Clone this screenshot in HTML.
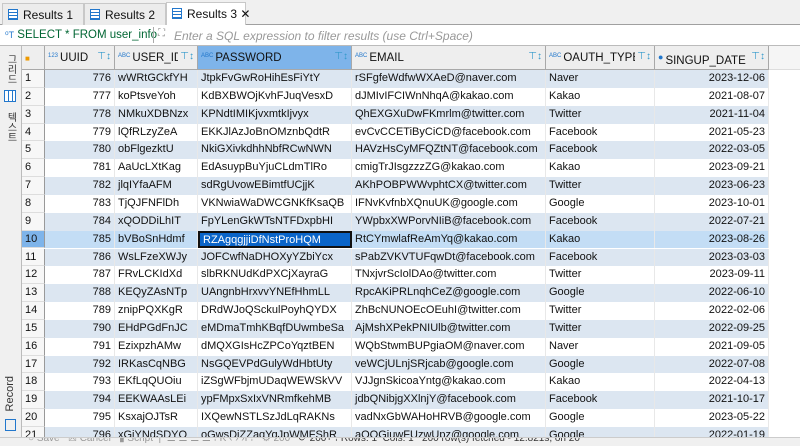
<!DOCTYPE html>
<html><head><meta charset="utf-8"><style>
*{margin:0;padding:0;box-sizing:border-box}
body{width:800px;height:446px;overflow:hidden;background:#fff;font-family:"Liberation Sans","Noto Sans CJK KR",sans-serif;font-size:11px;color:#111;position:relative}
.tabs{position:absolute;left:0;top:0;width:800px;height:25px;background:#f0f0f0;border-bottom:1px solid #a0a0a0}
.tab{position:absolute;top:3px;height:22px;border:1px solid #c8c8c8;border-bottom:none;background:#ececec;padding:4px 0 0 20px;font-size:12px;white-space:nowrap}
.tab.act{background:#fff;top:2px;height:24px}
.tab i{position:absolute;left:5px;top:5px;width:10px;height:11px;border:1px solid #27c;background:repeating-linear-gradient(#fff 0 2px,#27c 2px 3px)}
.filter{position:absolute;left:0;top:25px;width:800px;height:21px;border-bottom:1px solid #bbb;background:#fff;white-space:nowrap}
.side{position:absolute;left:0;top:46px;width:22px;height:391px;background:#f0f0f0;border-right:1px solid #bbb}
.hdr{position:absolute;top:46px;height:24px;background:#eeeeee;border-right:1px solid #a8a8a8;border-bottom:1px solid #a8a8a8;padding:6px 0 0 3px;font-size:11.5px;white-space:nowrap;overflow:hidden}
.hdr b{font-weight:normal;font-size:6px;color:#27c;margin-right:2px;vertical-align:4px}
.hdr s{position:absolute;right:3px;top:5px;text-decoration:none;color:#39c;font-size:10px;background:inherit;padding-left:2px}
.row{position:absolute;left:22px;width:747px;height:17.85px}
.row div{position:absolute;top:0;height:17.85px;padding:2px 3px 0;white-space:nowrap;overflow:hidden;border-right:1px solid #e8e8e8}
.o{background:#dce6f1}.e{background:#fff}.sel{background:#c3ddf5}
.n{left:0;width:23px;background:#f7f7f7;border-right:1px solid #999 !important;border-bottom:1px solid #ddd}
.u{left:23px;width:70px;text-align:right}
.i{left:93px;width:83px}
.p{left:176px;width:154px}
.m{left:330px;width:194px}
.a{left:524px;width:109px}
.d{left:633px;width:114px;text-align:right}
.bot{position:absolute;left:0;top:437px;width:800px;height:9px;background:#f0f0f0;border-top:1px solid #ccc;font-size:11px;color:#999;overflow:hidden}
</style></head><body>
<div class="tabs">
<div class="tab" style="left:2px;width:82px"><i></i>Results 1</div>
<div class="tab" style="left:84px;width:82px"><i></i>Results 2</div>
<div class="tab act" style="left:166px;width:80px"><i></i>Results 3 ✕</div>
</div>
<div class="filter">
<span style="position:absolute;left:5px;top:4px;color:#063;font-size:11.5px"><span style="color:#27c;font-size:9px">⁰T</span> SELECT * FROM user_info</span>
<span style="position:absolute;left:153px;top:2px;width:1px;height:16px;background:#aaa"></span>
<span style="position:absolute;left:158px;top:3px;color:#888;font-size:10px">⛶</span>
<span style="position:absolute;left:174px;top:4px;color:#999;font-style:italic;font-size:12px">Enter a SQL expression to filter results (use Ctrl+Space)</span>
</div>
<div class="side">
<div style="position:absolute;left:4px;top:8px;width:14px;font-size:10px;color:#333;writing-mode:vertical-rl">그리드</div>
<div style="position:absolute;left:4px;top:44px;width:12px;height:12px;border:1px solid #27c;background:repeating-linear-gradient(90deg,#fff 0 3px,#27c 3px 4px)"></div>
<div style="position:absolute;left:4px;top:66px;width:14px;font-size:10px;color:#333;writing-mode:vertical-rl">텍스트</div>
<div style="position:absolute;left:4px;top:330px;width:14px;font-size:11px;color:#333;writing-mode:vertical-rl;transform:rotate(180deg)">Record</div>
<div style="position:absolute;left:5px;top:373px;width:11px;height:12px;border:1px solid #27c"></div>
</div>
<div class="hdr" style="left:22px;width:23px;background:#eee"><span style="color:#e90;font-size:8px">■</span></div>
<div class="hdr" style="left:45px;width:70px"><b>123</b>UUID<s>⊤↕</s></div>
<div class="hdr" style="left:115px;width:83px"><b>ABC</b>USER_ID<s>⊤↕</s></div>
<div class="hdr" style="left:198px;width:154px;background:#7eb4ea"><b>ABC</b>PASSWORD<s>⊤↕</s></div>
<div class="hdr" style="left:352px;width:194px"><b>ABC</b>EMAIL<s>⊤↕</s></div>
<div class="hdr" style="left:546px;width:109px"><b>ABC</b>OAUTH_TYPE<s>⊤↕</s></div>
<div class="hdr" style="left:655px;width:114px"><b style="font-size:9px">●</b>SINGUP_DATE<s>⊤↕</s></div>
<div style="position:absolute;left:769px;top:46px;width:31px;height:24px;background:#f5f5f5;border-bottom:1px solid #ddd"></div>

<div class="row" style="top:70px"><div class="n">1</div><div class="u o">776</div><div class="i o">wWRtGCkfYH</div><div class="p o">JtpkFvGwRoHihEsFiYtY</div><div class="m o">rSFgfeWdfwWXAeD@naver.com</div><div class="a o">Naver</div><div class="d o">2023-12-06</div></div>
<div class="row" style="top:87.85px"><div class="n">2</div><div class="u e">777</div><div class="i e">koPtsveYoh</div><div class="p e">KdBXBWOjKvhFJuqVesxD</div><div class="m e">dJMIvIFCIWnNhqA@kakao.com</div><div class="a e">Kakao</div><div class="d e">2021-08-07</div></div>
<div class="row" style="top:105.7px"><div class="n">3</div><div class="u o">778</div><div class="i o">NMkuXDBNzx</div><div class="p o">KPNdtIMIKjvxmtkIjvyx</div><div class="m o">QhEXGXuDwFKmrlm@twitter.com</div><div class="a o">Twitter</div><div class="d o">2021-11-04</div></div>
<div class="row" style="top:123.55px"><div class="n">4</div><div class="u e">779</div><div class="i e">lQfRLzyZeA</div><div class="p e">EKKJlAzJoBnOMznbQdtR</div><div class="m e">evCvCCETiByCiCD@facebook.com</div><div class="a e">Facebook</div><div class="d e">2021-05-23</div></div>
<div class="row" style="top:141.4px"><div class="n">5</div><div class="u o">780</div><div class="i o">obFlgezktU</div><div class="p o">NkiGXivkdhhNbfRCwNWN</div><div class="m o">HAVzHsCyMFQZtNT@facebook.com</div><div class="a o">Facebook</div><div class="d o">2022-03-05</div></div>
<div class="row" style="top:159.25px"><div class="n">6</div><div class="u e">781</div><div class="i e">AaUcLXtKag</div><div class="p e">EdAsuypBuYjuCLdmTlRo</div><div class="m e">cmigTrJIsgzzzZG@kakao.com</div><div class="a e">Kakao</div><div class="d e">2023-09-21</div></div>
<div class="row" style="top:177.1px"><div class="n">7</div><div class="u o">782</div><div class="i o">jlqIYfaAFM</div><div class="p o">sdRgUvowEBimtfUCjjK</div><div class="m o">AKhPOBPWWvphtCX@twitter.com</div><div class="a o">Twitter</div><div class="d o">2023-06-23</div></div>
<div class="row" style="top:194.95px"><div class="n">8</div><div class="u e">783</div><div class="i e">TjQJFNFlDh</div><div class="p e">VKNwiaWaDWCGNKfKsaQB</div><div class="m e">IFNvKvfnbXQnuUK@google.com</div><div class="a e">Google</div><div class="d e">2023-10-01</div></div>
<div class="row" style="top:212.8px"><div class="n">9</div><div class="u o">784</div><div class="i o">xQODDiLhIT</div><div class="p o">FpYLenGkWTsNTFDxpbHI</div><div class="m o">YWpbxXWPorvNIiB@facebook.com</div><div class="a o">Facebook</div><div class="d o">2022-07-21</div></div>
<div class="row" style="top:230.65px"><div class="n" style="background:#7eb4ea">10</div><div class="u sel">785</div><div class="i sel">bVBoSnHdmf</div><div class="p" style="background:#0a64c8;color:#fff;border:2px solid #111;padding-top:1px">RZAgqgjjiDfNstProHQM</div><div class="m sel">RtCYmwlafReAmYq@kakao.com</div><div class="a sel">Kakao</div><div class="d sel">2023-08-26</div></div>
<div class="row" style="top:248.5px"><div class="n">11</div><div class="u o">786</div><div class="i o">WsLFzeXWJy</div><div class="p o">JOFCwfNaDHOXyYZbiYcx</div><div class="m o">sPabZVKVTUFqwDt@facebook.com</div><div class="a o">Facebook</div><div class="d o">2023-03-03</div></div>
<div class="row" style="top:266.35px"><div class="n">12</div><div class="u e">787</div><div class="i e">FRvLCKIdXd</div><div class="p e">slbRKNUdKdPXCjXayraG</div><div class="m e">TNxjvrScIolDAo@twitter.com</div><div class="a e">Twitter</div><div class="d e">2023-09-11</div></div>
<div class="row" style="top:284.2px"><div class="n">13</div><div class="u o">788</div><div class="i o">KEQyZAsNTp</div><div class="p o">UAngnbHrxvvYNEfHhmLL</div><div class="m o">RpcAKiPRLnqhCeZ@google.com</div><div class="a o">Google</div><div class="d o">2022-06-10</div></div>
<div class="row" style="top:302.05px"><div class="n">14</div><div class="u e">789</div><div class="i e">znipPQXKgR</div><div class="p e">DRdWJoQSckulPoyhQYDX</div><div class="m e">ZhBcNUNOEcOEuhI@twitter.com</div><div class="a e">Twitter</div><div class="d e">2022-02-06</div></div>
<div class="row" style="top:319.9px"><div class="n">15</div><div class="u o">790</div><div class="i o">EHdPGdFnJC</div><div class="p o">eMDmaTmhKBqfDUwmbeSa</div><div class="m o">AjMshXPekPNIUlb@twitter.com</div><div class="a o">Twitter</div><div class="d o">2022-09-25</div></div>
<div class="row" style="top:337.75px"><div class="n">16</div><div class="u e">791</div><div class="i e">EzixpzhAMw</div><div class="p e">dMQXGIsHcZPCoYqztBEN</div><div class="m e">WQbStwmBUPgiaOM@naver.com</div><div class="a e">Naver</div><div class="d e">2021-09-05</div></div>
<div class="row" style="top:355.6px"><div class="n">17</div><div class="u o">792</div><div class="i o">IRKasCqNBG</div><div class="p o">NsGQEVPdGulyWdHbtUty</div><div class="m o">veWCjULnjSRjcab@google.com</div><div class="a o">Google</div><div class="d o">2022-07-08</div></div>
<div class="row" style="top:373.45px"><div class="n">18</div><div class="u e">793</div><div class="i e">EKfLqQUOiu</div><div class="p e">iZSgWFbjmUDaqWEWSkVV</div><div class="m e">VJJgnSkicoaYntg@kakao.com</div><div class="a e">Kakao</div><div class="d e">2022-04-13</div></div>
<div class="row" style="top:391.3px"><div class="n">19</div><div class="u o">794</div><div class="i o">EEKWAAsLEi</div><div class="p o">ypFMpxSxIxVNRmfkehMB</div><div class="m o">jdbQNibjgXXlnjY@facebook.com</div><div class="a o">Facebook</div><div class="d o">2021-10-17</div></div>
<div class="row" style="top:409.15px"><div class="n">20</div><div class="u e">795</div><div class="i e">KsxajOJTsR</div><div class="p e">IXQewNSTLSzJdLqRAKNs</div><div class="m e">vadNxGbWAHoHRVB@google.com</div><div class="a e">Google</div><div class="d e">2023-05-22</div></div>
<div class="row" style="top:427px"><div class="n">21</div><div class="u o">796</div><div class="i o">xGiYNdSDYO</div><div class="p o">oGwsDiZZaqYqJpWMFShR</div><div class="m o">aOQGiuwFUzwUpz@google.com</div><div class="a o">Google</div><div class="d o">2022-01-19</div></div>

<div class="bot"><span style="position:absolute;left:28px;top:-5px;white-space:nowrap;font-size:10px">○ Save &nbsp; ☒ Cancel &nbsp; ▮ Script &nbsp;|&nbsp; ☰ ☰ ☰ ☰ ⁝ K ‹ › ›I ⁝ &nbsp; ⚙ 200 &nbsp; <span style="color:#333">⟳ 200+ ⁝ Rows: 1 &nbsp;Cols: 1 &nbsp; 200 row(s) fetched - 12.821s, on 20</span></span></div>
</body></html>
